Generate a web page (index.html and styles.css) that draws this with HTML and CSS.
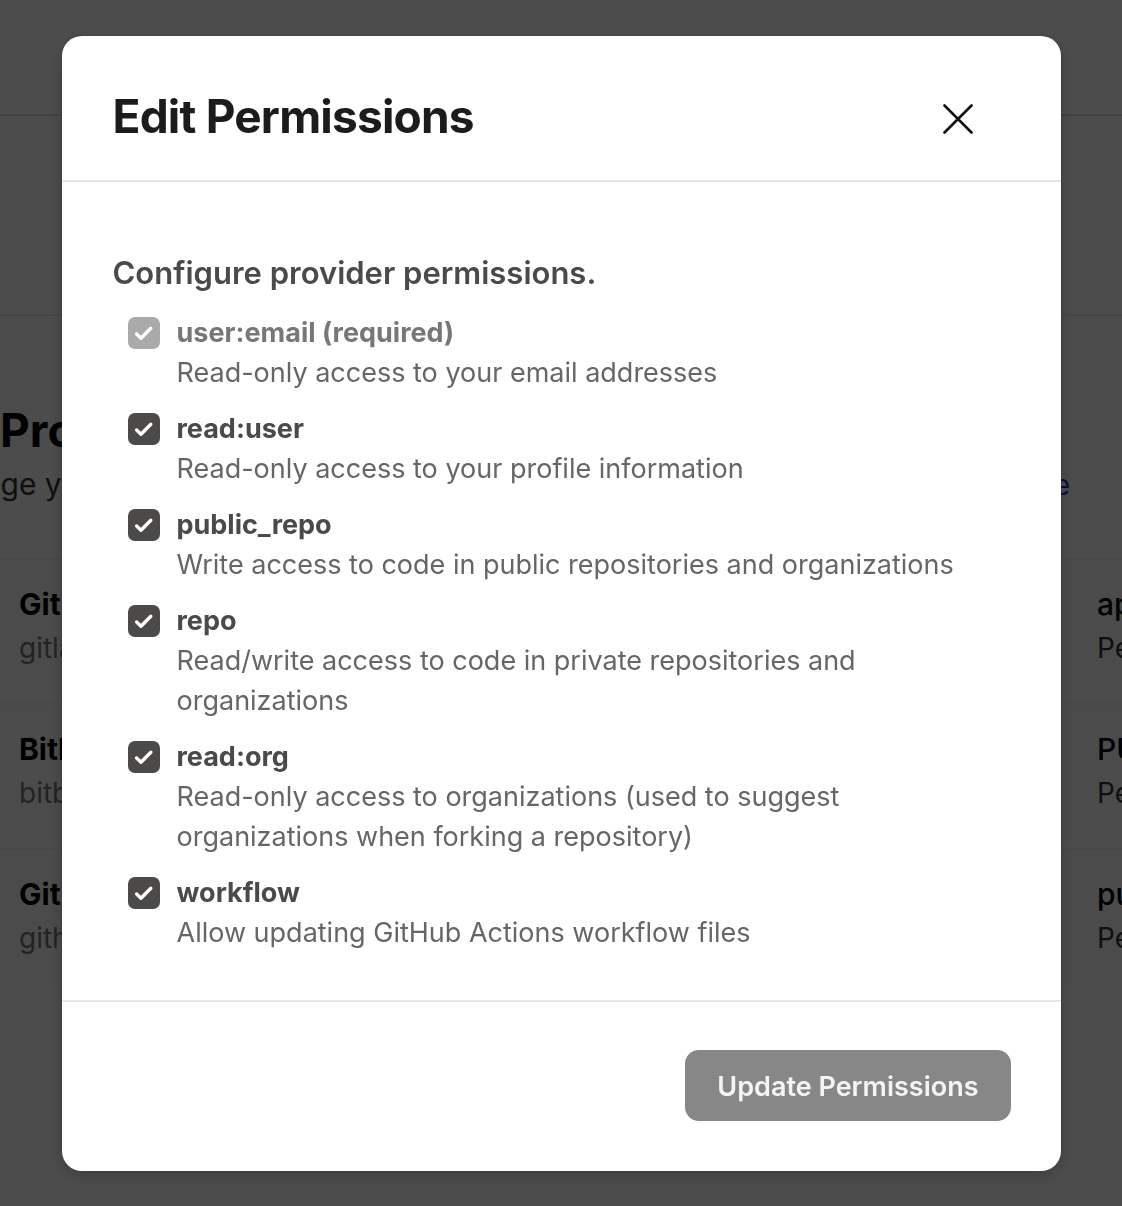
FILE: index.html
```html
<!DOCTYPE html>
<html lang="en">
<head>
    <meta charset="UTF-8">
    <meta name="viewport" content="width=device-width, initial-scale=1.0">
    <title>Edit Permissions</title>
    <link rel="stylesheet" href="styles.css">
</head>
<body>
    <div class="page">
        <div class="topbar"></div>
        <div class="account-bar"></div>
        <div class="providers">
            <div class="providers-head">
                <h2>Providers</h2>
                <p class="subtitle">Manage your connected Git providers</p>
                <a class="manage-link" href="#">Manage</a>
            </div>
            <div class="provider-row">
                <div class="provider-name">
                    <div class="title">GitLab</div>
                    <div class="host">gitlab.com</div>
                </div>
                <div class="provider-scope">
                    <div class="title">api</div>
                    <div class="host">Permissions</div>
                </div>
            </div>
            <div class="provider-row">
                <div class="provider-name">
                    <div class="title">Bitbucket</div>
                    <div class="host">bitbucket.org</div>
                </div>
                <div class="provider-scope">
                    <div class="title">PULL</div>
                    <div class="host">Permissions</div>
                </div>
            </div>
            <div class="provider-row">
                <div class="provider-name">
                    <div class="title">GitHub</div>
                    <div class="host">github.com</div>
                </div>
                <div class="provider-scope">
                    <div class="title">public_repo</div>
                    <div class="host">Permissions</div>
                </div>
            </div>
        </div>
    </div>

    <div class="backdrop">
        <div class="modal">
            <div class="modal-header">
                <h1>Edit Permissions</h1>
                <button class="close-btn" aria-label="Close">
                    <svg width="30" height="30" viewBox="0 0 30 30">
                        <path d="M1.5 1.5L28.5 28.5M28.5 1.5L1.5 28.5" stroke="#111" stroke-width="2.6" stroke-linecap="round" fill="none"/>
                    </svg>
                </button>
            </div>
            <div class="modal-body">
                <h3>Configure provider permissions.</h3>
                <label class="perm disabled">
                    <span class="box">
                        <svg width="20" height="20" viewBox="0 0 20 20"><path d="M2.6 11L7 15.3L16.8 5.2" stroke="#fff" stroke-width="3.4" stroke-linecap="round" stroke-linejoin="round" fill="none"/></svg>
                    </span>
                    <span class="text">
                        <span class="name">user:email (required)</span>
                        <span class="desc">Read-only access to your email addresses</span>
                    </span>
                </label>
                <label class="perm">
                    <span class="box">
                        <svg width="20" height="20" viewBox="0 0 20 20"><path d="M2.6 11L7 15.3L16.8 5.2" stroke="#fff" stroke-width="3.4" stroke-linecap="round" stroke-linejoin="round" fill="none"/></svg>
                    </span>
                    <span class="text">
                        <span class="name">read:user</span>
                        <span class="desc">Read-only access to your profile information</span>
                    </span>
                </label>
                <label class="perm">
                    <span class="box">
                        <svg width="20" height="20" viewBox="0 0 20 20"><path d="M2.6 11L7 15.3L16.8 5.2" stroke="#fff" stroke-width="3.4" stroke-linecap="round" stroke-linejoin="round" fill="none"/></svg>
                    </span>
                    <span class="text">
                        <span class="name">public_repo</span>
                        <span class="desc">Write access to code in public repositories and organizations</span>
                    </span>
                </label>
                <label class="perm">
                    <span class="box">
                        <svg width="20" height="20" viewBox="0 0 20 20"><path d="M2.6 11L7 15.3L16.8 5.2" stroke="#fff" stroke-width="3.4" stroke-linecap="round" stroke-linejoin="round" fill="none"/></svg>
                    </span>
                    <span class="text">
                        <span class="name">repo</span>
                        <span class="desc">Read/write access to code in private repositories and organizations</span>
                    </span>
                </label>
                <label class="perm">
                    <span class="box">
                        <svg width="20" height="20" viewBox="0 0 20 20"><path d="M2.6 11L7 15.3L16.8 5.2" stroke="#fff" stroke-width="3.4" stroke-linecap="round" stroke-linejoin="round" fill="none"/></svg>
                    </span>
                    <span class="text">
                        <span class="name">read:org</span>
                        <span class="desc">Read-only access to organizations (used to suggest organizations when forking a repository)</span>
                    </span>
                </label>
                <label class="perm">
                    <span class="box">
                        <svg width="20" height="20" viewBox="0 0 20 20"><path d="M2.6 11L7 15.3L16.8 5.2" stroke="#fff" stroke-width="3.4" stroke-linecap="round" stroke-linejoin="round" fill="none"/></svg>
                    </span>
                    <span class="text">
                        <span class="name">workflow</span>
                        <span class="desc">Allow updating GitHub Actions workflow files</span>
                    </span>
                </label>
            </div>
            <div class="modal-footer">
                <button class="update-btn">Update Permissions</button>
            </div>
        </div>
    </div>
</body>
</html>
```

FILE: styles.css
```css
body {
    margin: 0;
    font-family: Inter, "Noto Sans", sans-serif;
    background-color: #fff;
    height: 1206px;
    overflow: hidden;
}

/* page behind the dialog */
.page {
    color: #000;
}
.topbar {
    height: 114px;
    border-bottom: 2px solid #ddd;
}
.account-bar {
    height: 198px;
    border-bottom: 2px solid #e8e8e8;
}
.providers {
    padding-top: 86px;
}
.providers-head {
    position: relative;
    height: 156px;
}
.providers-head h2 {
    margin: 0;
    font-size: 46px;
    font-weight: 700;
    line-height: 56px;
}
.subtitle {
    margin: 8px 0 0 -78px;
    font-size: 30px;
    color: #333;
}
.manage-link {
    position: absolute;
    right: 52px;
    top: 66px;
    font-size: 28px;
    color: #1a3ad0;
    text-decoration: none;
}
.provider-row {
    display: flex;
    justify-content: space-between;
    padding: 22px 0 25px 19px;
    margin-bottom: 8px;
    background: #fafafa;
    border-top: 2px solid #f2f2f2;
}
.provider-row .title {
    font-size: 30px;
    font-weight: 700;
    line-height: 44px;
}
.provider-row .host {
    font-size: 28px;
    color: #777;
    line-height: 44px;
}
.provider-scope {
    width: 25px;
    overflow: hidden;
    white-space: nowrap;
}
.provider-scope .title {
    font-weight: 500;
}
.provider-scope .host {
    color: #333;
}

/* dialog */
.backdrop {
    position: fixed;
    inset: 0;
    background: rgba(0, 0, 0, 0.7);
    display: flex;
    align-items: center;
    justify-content: center;
}
.modal {
    width: 999px;
    background: #fff;
    border-radius: 20px;
    box-shadow: 0 0 0 1px rgba(0, 0, 0, 0.05), 0 4px 16px rgba(0, 0, 0, 0.2);
    overflow: hidden;
}
.modal-header {
    height: 146px;
    box-sizing: border-box;
    display: flex;
    align-items: center;
    justify-content: space-between;
    padding: 16px 71px 0 51px;
    border-bottom: 2px solid #e6e6e6;
}
.modal-header h1 {
    margin: 0;
    font-size: 46px;
    font-weight: 700;
    color: #1c1c1c;
    letter-spacing: -0.8px;
}
.close-btn {
    width: 64px;
    height: 64px;
    margin-top: 6px;
    border: none;
    background: none;
    padding: 0;
    display: flex;
    align-items: center;
    justify-content: center;
    cursor: pointer;
}
.modal-body {
    padding: 71px 50px 47px 51px;
    border-bottom: 2px solid #e6e6e6;
}
.modal-body h3 {
    margin: 0 0 20px;
    font-size: 31px;
    line-height: 40px;
    font-weight: 600;
    color: #4a4a4a;
}
.perm {
    display: flex;
    align-items: flex-start;
    gap: 17px;
    padding-left: 15px;
    margin-bottom: 16px;
}
.perm:last-child {
    margin-bottom: 0;
}
.box {
    flex: none;
    width: 32px;
    height: 32px;
    margin-top: 4px;
    border-radius: 7px;
    background: #4b4a49;
    display: flex;
    align-items: center;
    justify-content: center;
}
.perm.disabled .box {
    background: #aaa;
}
.text {
    display: flex;
    flex-direction: column;
    font-size: 27px;
    line-height: 40px;
}
.name {
    font-weight: 700;
    color: #4a4a4a;
}
.perm.disabled .name {
    color: #777;
}
.desc {
    color: #666;
}
.modal-footer {
    display: flex;
    justify-content: flex-end;
    padding: 48px 50px 50px;
}
.update-btn {
    height: 71px;
    padding: 2px 32px 0;
    border: none;
    border-radius: 14px;
    background: #878787;
    color: #f4f4f4;
    font-family: Inter, "Noto Sans", sans-serif;
    font-size: 27px;
    font-weight: 600;
    cursor: pointer;
}
```
